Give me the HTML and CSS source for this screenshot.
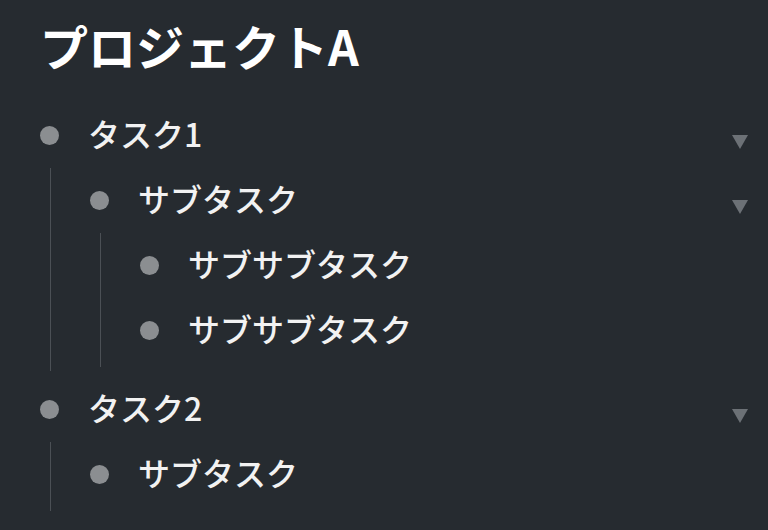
FILE: index.html
```html
<!DOCTYPE html>
<html lang="ja">
<head>
    <meta charset="UTF-8">
    <meta name="viewport" content="width=device-width, initial-scale=1.0">
    <title>プロジェクトA</title>
    <link rel="stylesheet" href="styles.css">
</head>
<body>
<div class="page">
    <h1 class="title">プロジェクトA</h1>
    <ul class="tree">
        <li>
            <div class="row">
                <span class="bullet"></span>
                <span class="label">タスク1</span>
                <span class="toggle"><svg width="16" height="14" viewBox="0 0 16 14"><path d="M0 0H16L8 14Z"/></svg></span>
            </div>
            <ul class="children">
                <li>
                    <div class="row">
                        <span class="bullet"></span>
                        <span class="label">サブタスク</span>
                        <span class="toggle"><svg width="16" height="14" viewBox="0 0 16 14"><path d="M0 0H16L8 14Z"/></svg></span>
                    </div>
                    <ul class="children">
                        <li>
                            <div class="row">
                                <span class="bullet"></span>
                                <span class="label">サブサブタスク</span>
                            </div>
                        </li>
                        <li>
                            <div class="row">
                                <span class="bullet"></span>
                                <span class="label">サブサブタスク</span>
                            </div>
                        </li>
                    </ul>
                </li>
            </ul>
        </li>
        <li>
            <div class="row">
                <span class="bullet"></span>
                <span class="label">タスク2</span>
                <span class="toggle"><svg width="16" height="14" viewBox="0 0 16 14"><path d="M0 0H16L8 14Z"/></svg></span>
            </div>
            <ul class="children">
                <li>
                    <div class="row">
                        <span class="bullet"></span>
                        <span class="label">サブタスク</span>
                    </div>
                </li>
            </ul>
        </li>
    </ul>
</div>
</body>
</html>
```
FILE: styles.css
```css
body {
    margin: 0;
    padding: 0;
    background-color: #262b30;
    color: #f2f2f2;
    font-family: "Noto Sans CJK JP", "Noto Sans", sans-serif;
}
.page {
    padding: 18px 20px 0 40px;
    height: 530px;
    box-sizing: border-box;
    overflow: hidden;
}
.title {
    margin: 0 0 30px 0;
    font-size: 48px;
    line-height: 55px;
    font-weight: 700;
    color: #ffffff;
}
.tree,
.children {
    list-style: none;
    margin: 0;
    padding: 0;
}
.tree > li + li {
    margin-top: 6px;
}
.children {
    margin-left: 10px;
    padding-left: 39px;
    padding-bottom: 4px;
    border-left: 1px solid #4b5055;
}
.row {
    display: flex;
    align-items: center;
    height: 65px;
}
.bullet {
    width: 19px;
    height: 19px;
    border-radius: 50%;
    background-color: #8b8e91;
    flex-shrink: 0;
}
.label {
    margin-left: 29px;
    padding-bottom: 5px;
    font-size: 32px;
    font-weight: 500;
    line-height: 1;
}
.toggle {
    margin-left: auto;
    margin-top: 12px;
    display: flex;
}
.toggle svg {
    fill: #6c7176;
}
```
